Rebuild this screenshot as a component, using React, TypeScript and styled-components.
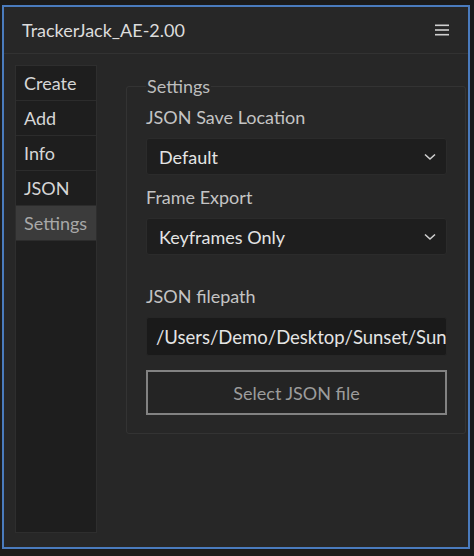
import styled, { createGlobalStyle } from 'styled-components';

const GlobalStyle = createGlobalStyle`
  html, body {
    margin: 0;
    padding: 0;
    background: #1b1b1b;
    font-family: Lato, "Open Sans", sans-serif;
  }
`;

const Frame = styled.div`
  box-sizing: border-box;
  width: 468px;
  height: 544px;
  margin: 5px 0 0 2px;
  border: 2px solid #4a7bbd;
  background: #272727;
  display: flex;
  flex-direction: column;
`;

const Header = styled.div`
  height: 46px;
  flex-shrink: 0;
  display: flex;
  align-items: center;
  justify-content: space-between;
  padding: 0 19px 0 18px;
  border-bottom: 1px solid #323232;
`;

const Title = styled.div`
  color: #dcdcdc;
  font-size: 18px;
`;

const Body = styled.div`
  flex: 1;
  display: flex;
  padding: 11px 2px 14px 11px;
  gap: 29px;
  min-height: 0;
`;

const Sidebar = styled.div`
  width: 80px;
  flex-shrink: 0;
  background: #1e1e1e;
  border: 1px solid #2e2e2e;
  display: flex;
  flex-direction: column;
`;

const Tab = styled.div<{ $active?: boolean }>`
  height: 34px;
  display: flex;
  align-items: center;
  padding-left: 8px;
  font-size: 18px;
  color: ${(p) => (p.$active ? '#a8a8a8' : '#d6d6d6')};
  background: ${(p) => (p.$active ? '#3b3b3b' : '#1e1e1e')};
  border-bottom: 1px solid #2c2c2c;
`;

const Fieldset = styled.fieldset`
  box-sizing: border-box;
  flex: 1;
  min-width: 0;
  align-self: flex-start;
  margin: 10px 0 0;
  padding: 0 18px 18px 19px;
  border: 1px solid #333333;
  border-radius: 3px;
  display: flex;
  flex-direction: column;
`;

const Legend = styled.legend`
  padding: 0 1px;
  margin-left: 0;
  font-size: 18px;
  color: #bdbdbd;
`;

const Label = styled.div<{ $top?: number }>`
  flex-shrink: 0;
  font-size: 18px;
  color: #c4c4c4;
  margin-top: ${(p) => p.$top ?? 0}px;
  margin-bottom: 10px;
`;

const Select = styled.div`
  box-sizing: border-box;
  flex-shrink: 0;
  height: 37px;
  display: flex;
  align-items: center;
  justify-content: space-between;
  padding: 0 10px 0 12px;
  background: #1e1e1e;
  border: 1px solid #2b2b2b;
  border-radius: 3px;
  color: #e4e4e4;
  font-size: 18px;
  margin-bottom: 11px;
`;

const PathInput = styled.div`
  box-sizing: border-box;
  flex-shrink: 0;
  height: 39px;
  display: flex;
  align-items: center;
  padding-left: 9px;
  background: #1a1a1a;
  border: 1px solid #262626;
  border-radius: 3px;
  color: #e4e4e4;
  font-size: 18.5px;
  white-space: nowrap;
  overflow: hidden;
`;

const Button = styled.div`
  box-sizing: border-box;
  flex-shrink: 0;
  height: 45px;
  margin-top: 14px;
  display: flex;
  align-items: center;
  justify-content: center;
  background: #242424;
  border: 2px solid #828282;
  color: #9c9c9c;
  font-size: 18px;
`;

const Chevron = () => (
  <svg width="12" height="8" viewBox="0 0 12 8" fill="none">
    <path d="M1 1.5 L6 6 L11 1.5" stroke="#d0d0d0" strokeWidth="1.6" />
  </svg>
);

const Menu = () => (
  <svg width="14" height="12" viewBox="0 0 14 12">
    <rect x="0" y="0.5" width="14" height="1.6" fill="#d0d0d0" />
    <rect x="0" y="5.2" width="14" height="1.6" fill="#d0d0d0" />
    <rect x="0" y="9.9" width="14" height="1.6" fill="#d0d0d0" />
  </svg>
);

const tabs = ['Create', 'Add', 'Info', 'JSON', 'Settings'];

export default function App() {
  return (
    <>
      <GlobalStyle />
      <Frame>
        <Header>
          <Title>TrackerJack_AE-2.00</Title>
          <Menu />
        </Header>
        <Body>
          <Sidebar>
            {tabs.map((t) => (
              <Tab key={t} $active={t === 'Settings'}>
                {t}
              </Tab>
            ))}
          </Sidebar>
          <Fieldset>
            <Legend>Settings</Legend>
            <Label $top={9}>JSON Save Location</Label>
            <Select>
              Default
              <Chevron />
            </Select>
            <Label>Frame Export</Label>
            <Select>
              Keyframes Only
              <Chevron />
            </Select>
            <Label $top={19}>JSON filepath</Label>
            <PathInput>/Users/Demo/Desktop/Sunset/Sun</PathInput>
            <Button>Select JSON file</Button>
          </Fieldset>
        </Body>
      </Frame>
    </>
  );
}
